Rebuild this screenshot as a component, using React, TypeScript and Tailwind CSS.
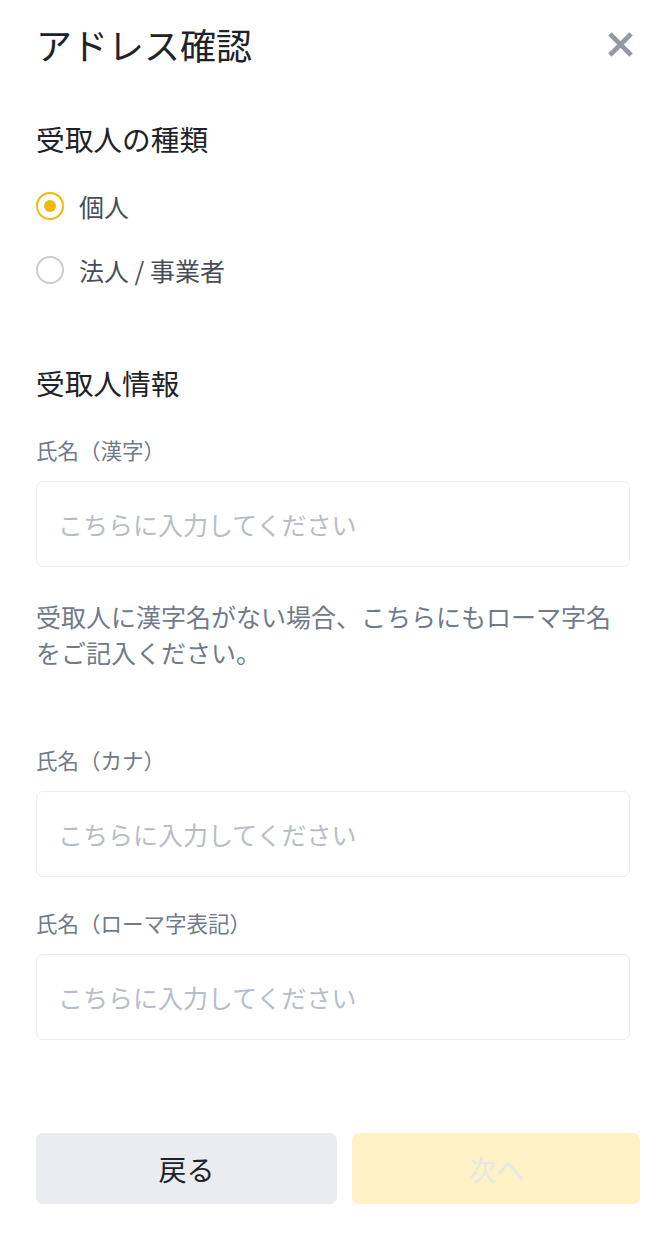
import { useState } from "react";

const FONT = { fontFamily: '"Noto Sans CJK JP", "Noto Sans", sans-serif' };

function Radio({ checked, label, onClick }: { checked: boolean; label: string; onClick: () => void }) {
  return (
    <div className="flex items-center gap-[15px] h-[36px] cursor-pointer" onClick={onClick}>
      {checked ? (
        <span className="flex items-center justify-center w-[28px] h-[28px] rounded-full border-2 border-[#f0b90b]">
          <span className="w-[12px] h-[12px] rounded-full bg-[#f0b90b]" />
        </span>
      ) : (
        <span className="w-[28px] h-[28px] rounded-full border-2 border-[#c9cdd3]" />
      )}
      <span className="text-[25px] leading-[36px] text-[#474d57]">{label}</span>
    </div>
  );
}

function Field({ label, className = "" }: { label: string; className?: string }) {
  return (
    <div className={className}>
      <div className="text-[21.5px] leading-[30px] text-[#707a8a] mb-[16px]">{label}</div>
      <input
        placeholder="こちらに入力してください"
        className="w-[594px] h-[86px] px-[21px] rounded-[7px] border border-[#eaecef] text-[25px] text-[#1e2329] placeholder:text-[#b7bdc6] outline-none"
        style={FONT}
      />
    </div>
  );
}

export default function App() {
  const [kind, setKind] = useState("personal");

  return (
    <div className="min-h-screen bg-white px-[36px] pt-[20px]" style={FONT}>
      {/* Header */}
      <div className="flex items-center justify-between h-[48px]">
        <h1 className="text-[36px] leading-[48px] text-[#1e2329]">アドレス確認</h1>
        <button className="w-[32px] h-[32px] flex items-center justify-center mt-[1px]">
          <svg width="27" height="27" viewBox="0 0 28 28">
            <path d="M3 3 L25 25 M25 3 L3 25" stroke="#939aa4" strokeWidth="5" strokeLinecap="butt" />
          </svg>
        </button>
      </div>

      {/* 受取人の種類 */}
      <h2 className="mt-[51px] text-[28.7px] leading-[40px] text-[#1e2329]">受取人の種類</h2>
      <div className="mt-[29px] flex flex-col gap-[28px]">
        <Radio checked={kind === "personal"} label="個人" onClick={() => setKind("personal")} />
        <Radio checked={kind === "corp"} label="法人 / 事業者" onClick={() => setKind("corp")} />
      </div>

      {/* 受取人情報 */}
      <h2 className="mt-[75px] text-[28.7px] leading-[40px] text-[#1e2329]">受取人情報</h2>

      <Field label="氏名（漢字）" className="mt-[32px]" />
      <p className="mt-[31px] w-[594px] text-[25px] leading-[36px] text-[#707a8a]">
        受取人に漢字名がない場合、こちらにもローマ字名をご記入ください。
      </p>

      <Field label="氏名（カナ）" className="mt-[75px]" />
      <Field label="氏名（ローマ字表記）" className="mt-[31px]" />

      {/* Buttons */}
      <div className="mt-[93px] flex gap-[15px]">
        <button className="shrink-0 w-[301px] h-[71px] rounded-[7px] bg-[#eaecef] text-[28px] text-[#1e2329]">戻る</button>
        <button className="shrink-0 w-[288px] h-[71px] rounded-[7px] bg-[#fef1c5] text-[28px] text-[#e6e8ea]" disabled>
          次へ
        </button>
      </div>
    </div>
  );
}
